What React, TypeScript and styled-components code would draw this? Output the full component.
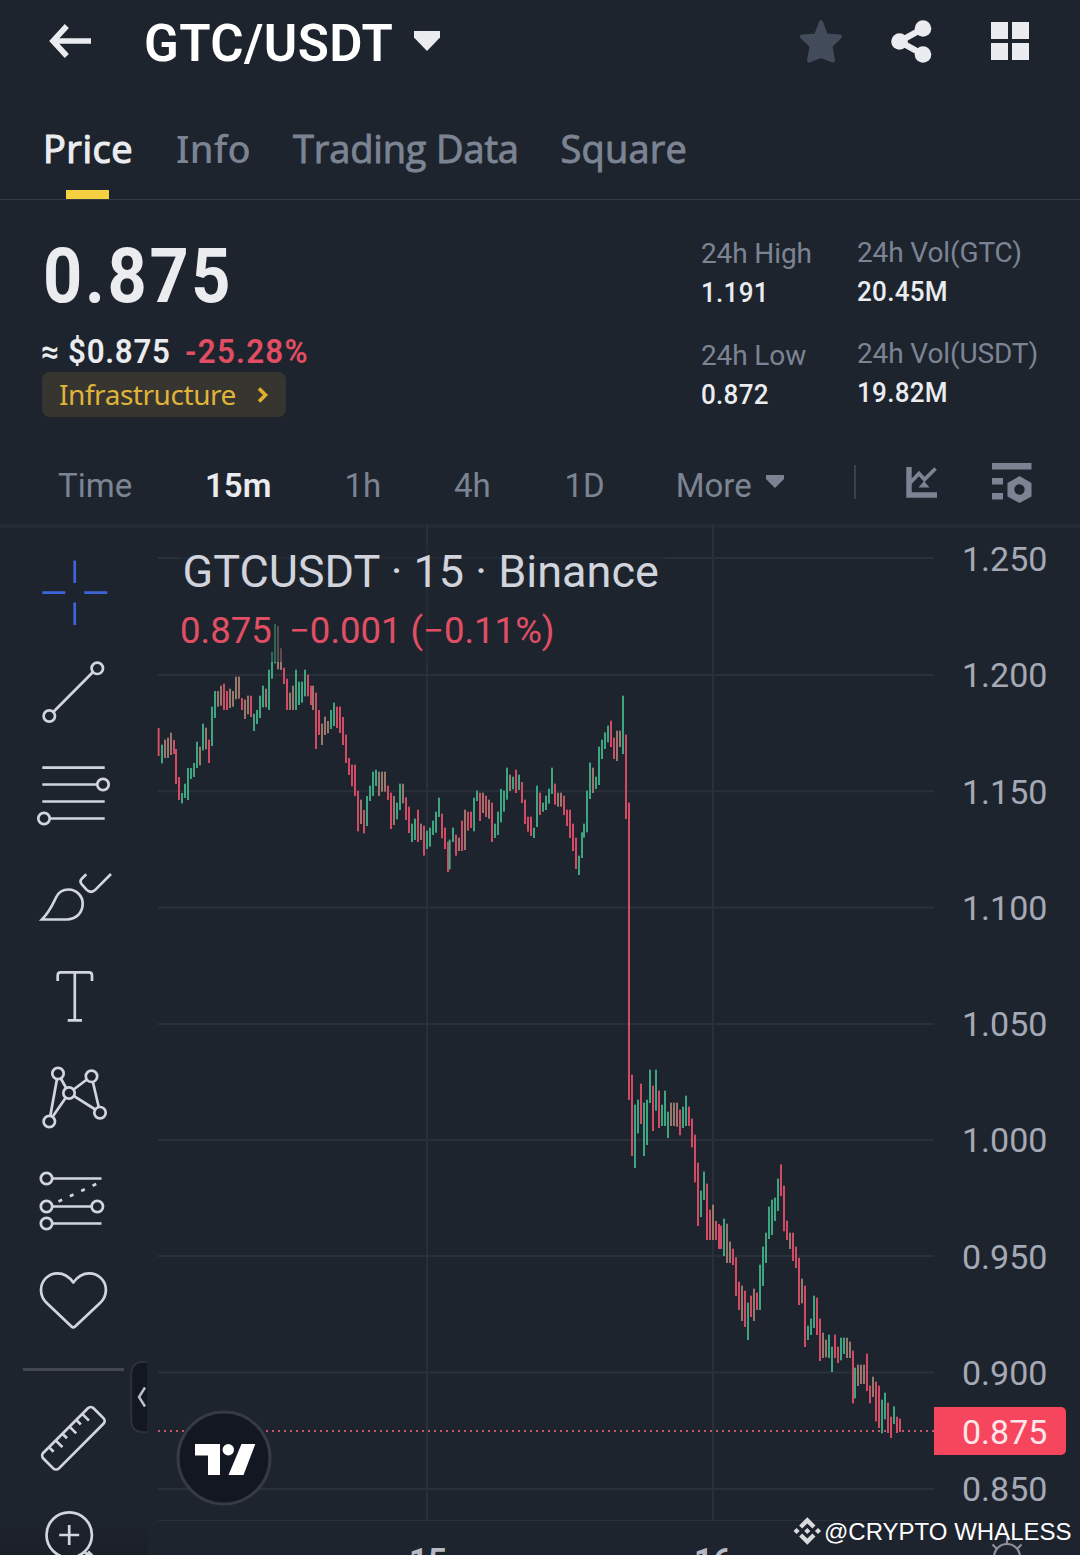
import React from 'react';
import styled, { createGlobalStyle } from 'styled-components';

const c = {
  bg: '#1e242e',
  line: '#343a44',
  grid: '#2a303a',
  white: '#eaecef',
  muted: '#7c8493',
  yellow: '#f5d142',
  red: '#f6465d',
  tool: '#d0d5df',
};

const GlobalStyle = createGlobalStyle`
  * { box-sizing: border-box; }
  body { margin: 0; background: ${c.bg}; }
`;

const Screen = styled.div`
  position: relative;
  display: flex;
  flex-direction: column;
  width: 1080px;
  height: 1555px;
  overflow: hidden;
  background: ${c.bg};
  font-family: Roboto, 'Noto Sans', sans-serif;
  color: ${c.white};
  white-space: nowrap;

  svg {
    display: block;
    flex: none;
  }
`;

/* ---------- header ---------- */

const Header = styled.header`
  display: flex;
  align-items: center;
  height: 82px;
  padding: 0 51px 0 49px;
`;

const PairName = styled.h1`
  width: 270px;
  margin: 0 0 0 53px;
  padding-top: 6px;
  font-size: 51px;
  font-weight: 600;
  line-height: 60px;
  letter-spacing: 0.4px;
  color: #fff;
`;

const Actions = styled.div`
  display: flex;
  align-items: center;
  margin-left: auto;
`;

const Action = styled.div<{ $gap?: number }>`
  margin-left: ${(p) => p.$gap ?? 0}px;
`;

/* ---------- tabs ---------- */

const Tabs = styled.nav`
  display: grid;
  grid-template-columns: 133px 117px 267.5px auto;
  height: 118px;
  padding: 32px 0 0 43px;
  border-bottom: 1px solid ${c.line};
`;

const Tab = styled.div<{ $active?: boolean; $serifI?: boolean; $track?: number }>`
  font-family: ${(p) => (p.$serifI ? "'Noto Sans'" : "'Open Sans'")}, sans-serif;
  font-size: 38px;
  font-weight: ${(p) => (p.$serifI ? 500 : 400)};
  line-height: 69px;
  letter-spacing: ${(p) => p.$track ?? 0}px;
  color: ${(p) => (p.$active ? c.white : c.muted)};
  -webkit-text-stroke: ${(p) => (p.$serifI ? '0' : p.$active ? '1.2px' : '0.9px')} currentColor;
`;

const TabMarker = styled.div`
  width: 43px;
  height: 9px;
  margin: 7px 0 0 23px;
  background: ${c.yellow};
`;

/* ---------- price summary ---------- */

const Summary = styled.section`
  display: flex;
  height: 245px;
`;

const PriceColumn = styled.div`
  display: flex;
  flex: none;
  flex-direction: column;
  width: 701px;
  padding: 40px 0 0 42px;
`;

const LastPrice = styled.div`
  margin: 0 0 23px 1px;
  font-size: 76px;
  font-weight: 700;
  line-height: 72px;
  letter-spacing: 3px;
  transform: scaleX(0.9);
  transform-origin: left;
`;

const FiatRow = styled.div`
  display: flex;
  height: 34px;
  margin: 0 0 3px -1px;
  font-size: 33px;
  font-weight: 600;
  line-height: 34px;
`;

const FiatPrice = styled.div`
  width: 144px;
  letter-spacing: 0.7px;
  transform: scaleX(0.95);
  transform-origin: left;
`;

const Change = styled.div`
  letter-spacing: 1.3px;
  color: #e14d63;
  transform: scaleX(0.95);
  transform-origin: left;
`;

const Category = styled.div`
  display: flex;
  align-items: center;
  width: 244px;
  height: 45px;
  padding-left: 17px;
  border-radius: 8px;
  background: #37352f;
  color: #e0b43a;
  font-family: 'Noto Sans', sans-serif;
  font-size: 28px;
  letter-spacing: -0.45px;
`;

const CategoryName = styled.span`
  width: 197px;
  padding-bottom: 2px;
`;

const StatColumn = styled.div<{ $top: number }>`
  display: flex;
  flex: none;
  flex-direction: column;
  width: 156px;
  padding-top: ${(p) => p.$top}px;
`;

const Stat = styled.div`
  height: 101.5px;
  font-size: 28px;
  line-height: 28px;
`;

const StatLabel = styled.div`
  margin-bottom: 11px;
  letter-spacing: -0.12px;
  color: ${c.muted};
`;

const StatValue = styled.div`
  font-weight: 500;
  letter-spacing: 0.3px;
  transform: scaleX(0.93);
  transform-origin: left;
`;

/* ---------- intervals ---------- */

const Intervals = styled.div`
  display: grid;
  grid-template-columns: 147px 139.4px 109.6px 110.5px 111.2px 90.3px 88px 52px 86px auto;
  align-items: center;
  height: 79px;
  padding-left: 58px;
`;

const Interval = styled.div<{ $active?: boolean }>`
  font-size: 33px;
  line-height: 40px;
  padding-top: 2px;
  font-weight: ${(p) => (p.$active ? 600 : 400)};
  color: ${(p) => (p.$active ? c.white : c.muted)};
`;

const IntervalIcon = styled.div<{ $lift: number }>`
  padding-bottom: ${(p) => p.$lift}px;
`;

const Divider = styled.div`
  width: 2px;
  height: 34px;
  margin-bottom: 5px;
  background: #3a404c;
`;

/* ---------- chart ---------- */

const Chart = styled.main`
  display: flex;
  flex: 1;
  border-top: 4px solid #232a34;
`;

const Toolbar = styled.aside`
  position: relative;
  display: flex;
  flex-direction: column;
  width: 148px;
  background: linear-gradient(transparent 96%, #1a1f28);
`;

const ToolSeparator = styled.div`
  width: 101px;
  height: 3px;
  margin-left: 23px;
  background: #444852;
`;

const CollapseTab = styled.div`
  position: absolute;
  left: 130px;
  top: 833px;
`;

const Plot = styled.div`
  position: relative;
  display: flex;
  flex-direction: column;
  width: 786px;
`;

const Candles = styled.svg`
  margin-top: -4px;
`;

const Legend = styled.div`
  position: absolute;
  left: 31px;
  top: 16px;
`;

const LegendLine = styled.div<{ $size: number; $color: string; $height: number }>`
  display: flex;
  width: max-content;
  height: ${(p) => p.$height}px;
  padding-right: 6px;
  font-size: ${(p) => p.$size}px;
  line-height: ${(p) => p.$height}px;
  color: ${(p) => p.$color};
  background: rgba(30, 36, 46, 0.5);
`;

const LegendTitle = styled.span`
  padding-left: 3.5px;
`;

const LegendPrice = styled.span`
  width: 110px;
  padding-left: 1px;
`;

const ChartLogo = styled.div`
  position: absolute;
  left: 27px;
  top: 881px;
`;

const TimeAxis = styled.div`
  display: flex;
  height: 34px;
  padding: 20px 0 0 261px;
  overflow: hidden;
  font-size: 33px;
  font-weight: 700;
  line-height: 40px;
  color: #b4b9c4;
`;

const TimeMark = styled.div`
  flex: none;
  width: 285px;
`;

const PriceAxis = styled.div`
  position: relative;
  display: flex;
  flex-direction: column;
  gap: 82.25px;
  width: 146px;
  padding: 14px 0 0 28px;
  font-size: 34px;
  line-height: 34px;
  color: #a4a9b5;
`;

const PriceTag = styled.div`
  position: absolute;
  left: 0;
  top: 879px;
  width: 132px;
  height: 48px;
  padding-left: 28px;
  border-radius: 0 5px 5px 0;
  background: ${c.red};
  color: #fbe6ea;
  line-height: 50px;
`;

const AxisSettings = styled.div`
  position: absolute;
  left: 56px;
  top: 1007px;
`;

const Watermark = styled.div`
  position: absolute;
  left: 793px;
  top: 1516px;
  display: flex;
  align-items: center;
  height: 30px;
  font: 24px/30px 'Liberation Sans', Arial, sans-serif;
  color: #fff;
`;

const WatermarkName = styled.span`
  padding: 2px 0 0 2px;
`;

/* ---------- data ---------- */

type Block = { x: number; y: number; bars: string };

// Each bar is "<x><kind><high>-<low>" in thirds of a pixel from the block origin.
const blocks: Block[] = [
  {
    x: 150,
    y: 540,
    bars: `26r564-648 36g614-670 45m599-654 54m593-654 63m578-645 72r600-642 78r627-732 87r711-780 96g759-790
105g731-774 114g684-780 123g684-717 132g669-711 141g605-684 150m620-676 159g551-631 168m563-628 177r599-669
186g500-618 195g453-534 204m453-500 213m437-497 222r431-510 231r453-510 240m446-504 249m453-500 258m410-478
267m410-476 276r474-510 285m479-537 294m467-523 303r467-531 312g521-573 321g510-552 330g467-534 339g437-502
348m446-502 357g389-510 366g335-416 375g252-370 384m258-388 393m325-390 402r383-432 411r416-510 420m458-510
429m437-510 438g389-510 447g425-495 456g425-488 465g389-469 474r404-469 483r437-495 489m437-510 498r458-627
507r510-585 516m551-615 525m530-585 534m543-580 543g510-567 552g488-558 561r500-564 570r500-579 579r531-615
588r584-669 597r654-705 606r674-739 615r674-768 624r752-874 633m779-852 642r810-880 651g768-858 660g737-783
669g695-768 678g689-738 687m695-768 696m695-755 705m695-755 714r737-780 723r758-867 732m768-855 741g788-838`,
  },
  {
    x: 350,
    y: 680,
    bars: `150g311-390 159m311-370 168r352-420 177r380-459 186g431-486 195g416-480 204r389-486 213m431-480 222r437-527
231g452-507 240g443-500 249g422-465 258g395-458 267g353-411 276r401-475 285r443-507 294r485-576 299g479-568
309g443-486 318r464-527 327m473-513 336r422-513 345m389-510 354r395-452 363r395-444 372g353-454 381g332-363
390r338-423 399m338-399 408r347-411 417m359-416 426r368-486 435g431-474 444g395-465 453g327-427 462g332-395
471g263-359 480m284-333 489g290-328 498r269-339 507g284-330 516r306-369 525r359-432 534r410-455 543r410-468
552g443-474 561g317-441 570r338-405 579g368-395 588g347-390 597g326-371 606g263-342 615r311-374 624m338-380
633m338-380 642r347-405 651r389-438 660r389-474 669r431-513 678r473-567 687g527-585 696g457-534 702g431-473
711g332-457 720g248-357 729m263-339 738g290-327 747g200-315 756g179-237 765g157-207 774g137-187 783r122-201
792r173-237 801m152-243 810m152-201 819g47-222 828r164-417 837r368-1260`,
  },
  {
    x: 600,
    y: 1030,
    bars: `96r134-378 105g224-414 114g209-310 123r161-282 132g218-378 141g209-345 150g119-219 159r167-303 168g119-242
177r182-294 186g224-288 195g182-288 204g245-324 213m218-288 222m218-288 231m218-290 240r239-316 249g230-294
258g197-288 267r230-288 276r266-352 285r314-457 294r398-588 303g482-561 312g425-510 321r461-630 330r539-630
339m524-630 348r573-630 357r582-657 363r587-657 372g566-678 381m581-699 390m635-699 399r656-705 408r682-798
417r755-840 426m767-873 435r782-891 444g818-930 453r797-861 462m776-873 471r788-840 480g704-840 489g650-768
498g608-699 507g530-627 516g509-615 525g503-573`,
  },
  {
    x: 720,
    y: 1140,
    bars: `174g116-213 183r73-168 192r137-274 201r242-300 210m278-327 219r278-363 228r320-384 237r353-495 246m416-490
255r437-621 264g557-600 273g536-585 282g467-564 291r473-585 300r536-663 309m578-654 318m599-652 327g584-654
336g620-696 345r584-654 354r620-669 363g593-661 372g593-642 381m593-654 390m605-654 399r632-790 405g683-775
414m674-738 423m674-732 432m674-732 441r641-753 450r737-790 459m710-771 468r725-844 477r737-864 486g779-880
495g758-838 504r788-879 513r830-894 522g799-852 531r830-879 540r836-876`,
  },
];

const kinds: Record<string, string> = { g: '#3fae86', r: '#dc4d66', m: '#a07c70' };

const bars = blocks.flatMap((b) =>
  b.bars.split(/\s+/).map((s) => {
    const [, x, kind, high, low] = s.match(/^(\d+)([grm])(\d+)-(\d+)$/)!;
    return { x: b.x + +x / 3, top: b.y + +high / 3, bottom: b.y + +low / 3, fill: kinds[kind] };
  }),
);

const gridLevels = [558, 675, 791.3, 907.5, 1024, 1140, 1256, 1372.5, 1489];
const axisLabels = ['1.250', '1.200', '1.150', '1.100', '1.050', '1.000', '0.950', '0.900', '0.850'];

const stats = [
  { top: 40.4, items: [['24h High', '1.191'], ['24h Low', '0.872']] },
  { top: 38.8, items: [['24h Vol(GTC)', '20.45M'], ['24h Vol(USDT)', '19.82M']] },
];

/* ---------- drawing tools ---------- */

type ToolProps = { top: number; height: number; color?: string; children: React.ReactNode };

const Tool = ({ top, height, color = c.tool, children }: ToolProps) => (
  <svg width={148} height={height} viewBox={`0 ${top} 148 ${height}`} fill="none" stroke={color} strokeWidth={2.7}>
    {children}
  </svg>
);

const Knob = ({ x, y }: { x: number; y: number }) => <circle cx={x} cy={y} r={5.7} fill={c.bg} />;

const DrawingTools = () => (
  <Toolbar>
    <Tool top={528} height={114} color="#3d64d8">
      <path d="M74.7 560.5V583M74.7 602.5V625M42.3 592.7H65.3M84.3 592.7H107.3" />
    </Tool>
    <Tool top={642} height={100}>
      <path d="M49.3 716 97 668" />
      <Knob x={97.3} y={668.3} />
      <Knob x={49.3} y={716} />
    </Tool>
    <Tool top={742} height={104}>
      <path d="M42.3 767.7H104.7M42.3 784.5H98M42.3 801.5H104.7M49 818.5H104.7" />
      <Knob x={103} y={784.5} />
      <Knob x={44} y={818.5} />
    </Tool>
    <Tool top={846} height={100}>
      <path d="M42 919.5C50.500 910.500 53 903.500 56 897.500C59 891 63.500 889.500 68.500 889.500C76.500 889.500 82.700 896 82.700 903.500C82.700 913 76 919.500 66.500 919.500Z" />
      <path d="M86.300 874.300 82 878.500Q79 881.500 82 884.600L86.500 889.600Q91 894 95.500 889.600L111 874" />
    </Tool>
    <Tool top={946} height={99}>
      <path d="M57.700 981V975.300Q57.700 972.300 60.700 972.300H89Q92 972.300 92 975.300V981M74.800 972.300V1020.300M67.700 1020.300H82" />
    </Tool>
    <Tool top={1045} height={105}>
      <path d="M49.300 1121.500 58 1073.500 69 1093ZM69 1093 91.500 1076 100 1112.500Z" />
      <Knob x={58} y={1073.5} />
      <Knob x={91.5} y={1076.3} />
      <Knob x={69} y={1093} />
      <Knob x={49.3} y={1121.5} />
      <Knob x={100} y={1112.7} />
    </Tool>
    <Tool top={1150} height={101}>
      <path d="M46.500 1178.500H101.500M46.500 1206.500H97M46.500 1223.500H101.500" />
      <path d="M58.500 1201.400 98 1183.200" strokeDasharray="4 8.500" />
      <Knob x={46.5} y={1178.5} />
      <Knob x={46.5} y={1206.5} />
      <Knob x={97.3} y={1206.5} />
      <Knob x={46.5} y={1223.5} />
    </Tool>
    <Tool top={1251} height={117}>
      <path
        strokeLinejoin="round"
        d="M73.300 1282.500C69.500 1277 64 1273.300 57.500 1273.300C48.500 1273.300 41 1280.700 41 1290C41 1295.500 43.300 1299.800 47 1303.300L71.500 1326.500Q73.300 1328.200 75.100 1326.500L99.800 1303.300C103.500 1299.800 105.900 1295.500 105.900 1290C105.900 1280.700 98.400 1273.300 89.200 1273.300C82.700 1273.300 77.200 1277 73.300 1282.500Z"
      />
    </Tool>
    <ToolSeparator />
    <Tool top={1371} height={120}>
      <g transform="translate(73.400 1438.300) rotate(-45)">
        <rect x={-35.500} y={-11} width={71} height={22} rx={4} />
        <path d="M-25-11V-4.500M-15.500-11V-1.500M-6-11V-4.500M4-11V-1.500M13.500-11V-4.500M22-11V-1.500" transform="translate(1.500 0)" />
      </g>
    </Tool>
    <Tool top={1491} height={64}>
      <circle cx={69.2} cy={1535} r={22.700} />
      <path d="M69.200 1525V1545M59.200 1535H79.200M84.500 1552 92 1559M88 1551.500 95 1558" />
    </Tool>
    <CollapseTab>
      <svg width={17} height={72} viewBox="130 1361 17 72" fill="none">
        <path d="M147 1361.700H144Q131.200 1361.700 131.200 1374.500V1419.500Q131.200 1432.300 144 1432.300H147" fill="#131722" stroke="#2c323d" strokeWidth={2} />
        <path d="M145 1387.500 139 1397 145 1406.500" stroke="#b9bec9" strokeWidth={2.500} />
      </svg>
    </CollapseTab>
  </Toolbar>
);

/* ---------- screen ---------- */

export default function App() {
  return (
    <Screen>
      <GlobalStyle />

      <Header>
        <svg width={42} height={34} viewBox="0 0 42 34" fill="none" stroke={c.white} strokeWidth={5.600}>
          <path d="M42 17H5M17.800 2 4 17 17.800 32" />
        </svg>
        <PairName>GTC/USDT</PairName>
        <svg width={26} height={20} viewBox="0 0 26 20" fill={c.white}>
          <path d="M0 0H26V6.500L13 20 0 6.500Z" />
        </svg>
        <Actions>
          <svg width={42} height={43} viewBox="0 0 42 43" fill="#434c5a" stroke="#434c5a" strokeWidth={4} strokeLinejoin="round">
            <path d="M21 2.200 26 15.600 40 16.600 30.400 26 33 40.600 21 36 9 40.600 11.600 26 2 16.600 16 15.600Z" />
          </svg>
          <Action $gap={49}>
            <svg width={41} height={43} viewBox="0 0 41 43" fill={c.white}>
              <path d="M8.500 21.500 32 8.500M8.500 21.500 32 34.500" stroke={c.white} strokeWidth={6} />
              <circle cx={8.500} cy={21.500} r={8.300} />
              <circle cx={32} cy={8.500} r={8.300} />
              <circle cx={32} cy={34.500} r={8.300} />
            </svg>
          </Action>
          <Action $gap={59}>
            <svg width={38} height={38} viewBox="0 0 38 38" fill={c.white}>
              <path d="M0 0H17V17H0ZM21 0H38V17H21ZM0 21H17V38H0ZM21 21H38V38H21Z" />
            </svg>
          </Action>
        </Actions>
      </Header>

      <Tabs>
        <div>
          <Tab $active $track={0.5}>Price</Tab>
          <TabMarker />
        </div>
        <Tab $serifI $track={0.2}>Info</Tab>
        <Tab $track={-0.15}>Trading Data</Tab>
        <Tab $track={0.2}>Square</Tab>
      </Tabs>

      <Summary>
        <PriceColumn>
          <LastPrice>0.875</LastPrice>
          <FiatRow>
            <FiatPrice>≈ $0.875</FiatPrice>
            <Change>-25.28%</Change>
          </FiatRow>
          <Category>
            <CategoryName>Infrastructure</CategoryName>
            <svg width={14} height={16} viewBox="0 0 14 16" fill="none" stroke="#e3ae2c" strokeWidth={3.600}>
              <path d="M3 1.500 9.500 8 3 14.500" />
            </svg>
          </Category>
        </PriceColumn>
        {stats.map((column) => (
          <StatColumn key={column.top} $top={column.top}>
            {column.items.map(([label, value]) => (
              <Stat key={label}>
                <StatLabel>{label}</StatLabel>
                <StatValue>{value}</StatValue>
              </Stat>
            ))}
          </StatColumn>
        ))}
      </Summary>

      <Intervals>
        <Interval>Time</Interval>
        <Interval $active>15m</Interval>
        <Interval>1h</Interval>
        <Interval>4h</Interval>
        <Interval>1D</Interval>
        <Interval>More</Interval>
        <IntervalIcon $lift={6}>
          <svg width={18} height={13} viewBox="0 0 18 13" fill={c.muted}>
            <path d="M0 0H18V4L9 13 0 4Z" />
          </svg>
        </IntervalIcon>
        <Divider />
        <IntervalIcon $lift={5}>
          <svg width={31} height={31} viewBox="0 0 31 31" fill="none" stroke={c.muted}>
            <path d="M3 0V28H31" strokeWidth={5.400} />
            <path d="M4 16 13 6.500 18.500 12.500 29.500 1.500" strokeWidth={3.800} />
            <path d="M18 14 23.500 20.500H12.500Z" fill={c.muted} stroke="none" />
          </svg>
        </IntervalIcon>
        <IntervalIcon $lift={3}>
          <svg width={40} height={40} viewBox="0 0 40 40" fill={c.muted}>
            <path d="M0 0H39.500V6.500H0ZM0 15H11V21.500H0ZM0 30H11V36.500H0Z" />
            <path fillRule="evenodd" d="M27.500 13 39.500 20V33.500L27.500 40 15.500 33.500V20ZM27.500 21.300A5.200 5.200 0 1 0 27.500 31.700A5.200 5.200 0 1 0 27.500 21.300Z" />
          </svg>
        </IntervalIcon>
      </Intervals>

      <Chart>
        <DrawingTools />

        <Plot>
          <Candles width={786} height={997} viewBox="148 524 786 997">
            <g fill={c.grid}>
              {gridLevels.map((y) => (
                <rect key={y} x={158} y={y - 1} width={776} height={2} />
              ))}
              <rect x={426} y={524} width={2} height={997} />
              <rect x={712} y={524} width={2} height={997} />
              <rect x={158} y={1520} width={776} height={1} />
            </g>
            {bars.map((b, i) => (
              <rect key={i} x={b.x - 0.950} y={b.top} width={1.900} height={b.bottom - b.top} fill={b.fill} />
            ))}
            <path d="M158 1431H934" stroke="#c75668" strokeWidth={2} strokeDasharray="2 4" />
          </Candles>
          <TimeAxis>
            <TimeMark>15</TimeMark>
            <TimeMark>16</TimeMark>
          </TimeAxis>
          <Legend>
            <LegendLine $size={45} $height={56} $color="#d1d4dc">
              <LegendTitle>GTCUSDT · 15 · Binance</LegendTitle>
            </LegendLine>
            <LegendLine $size={36.5} $height={62} $color="#e04f64">
              <LegendPrice>0.875</LegendPrice>
              <span>−0.001 (−0.11%)</span>
            </LegendLine>
          </Legend>
          <ChartLogo>
            <svg width={98} height={98} viewBox="175 1409 98 98">
              <circle cx={224} cy={1458} r={46} fill="#131722" stroke="#363a45" strokeWidth={3} />
              <path d="M195 1444H220V1475H208V1455.500H195ZM241.500 1444H255.300L243.500 1475H228.500Z" fill="#fff" />
              <circle cx={228.300} cy={1449.700} r={5.700} fill="#fff" />
            </svg>
          </ChartLogo>
        </Plot>

        <PriceAxis>
          {axisLabels.map((label) => (
            <div key={label}>{label}</div>
          ))}
          <PriceTag>0.875</PriceTag>
          <AxisSettings>
            <svg width={36} height={20} viewBox="990 1535 36 20" fill="none" stroke="#8b909b" strokeWidth={2.200}>
              <circle cx={1007} cy={1557} r={13} />
              <path d="M1007 1538V1544M992.500 1544.500 997 1549M1021.500 1544.500 1017 1549" />
            </svg>
          </AxisSettings>
        </PriceAxis>
      </Chart>

      <Watermark>
        <svg width={29} height={30} viewBox="0 0 29 30" fill="#d9dadc">
          <path d="M14.300 1.300 22.500 9.500 19.400 12.600 14.300 7.500 9.200 12.600 6.100 9.500ZM14.300 28.700 22.500 20.500 19.400 17.400 14.300 22.500 9.200 17.400 6.100 20.500ZM14.300 11.900 17.400 15 14.300 18.100 11.200 15ZM3.600 11.900 6.700 15 3.600 18.100 0.500 15ZM25 11.900 28.100 15 25 18.100 21.900 15Z" />
        </svg>
        <WatermarkName>@CRYPTO WHALESS</WatermarkName>
      </Watermark>
    </Screen>
  );
}
